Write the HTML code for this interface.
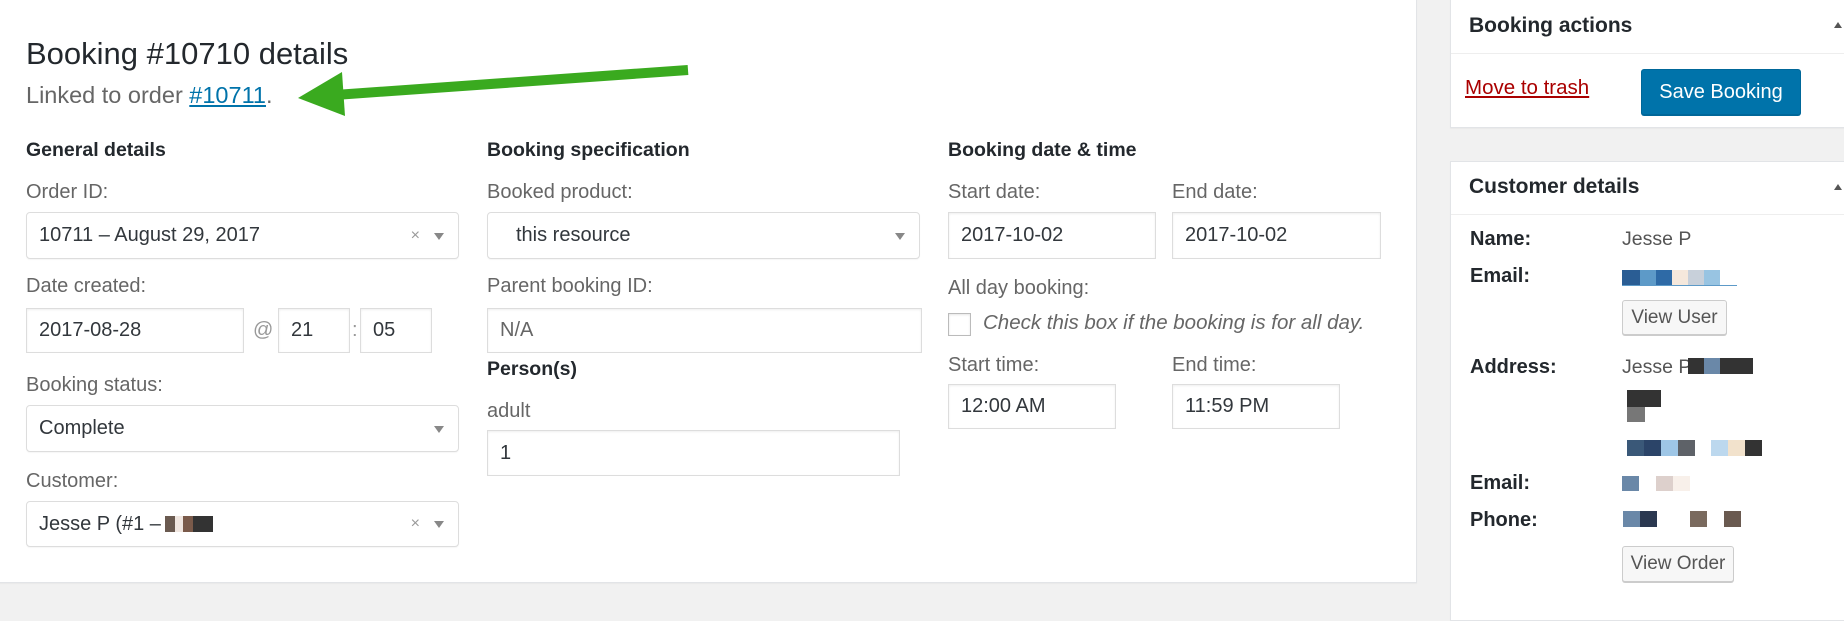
<!DOCTYPE html>
<html><head><meta charset="utf-8"><style>
*{box-sizing:border-box;margin:0;padding:0}
body{width:1844px;height:608px;background:#f1f1f1;position:relative;overflow:hidden;font-family:"Liberation Sans",Arial,sans-serif;color:#444}
.a{position:absolute;white-space:nowrap}
.panel{position:absolute;background:#fff;border:1px solid #e2e4e7;box-shadow:0 1px 1px rgba(0,0,0,.04)}
.lbl{font-size:20px;color:#666}
.h{font-size:19.5px;font-weight:bold;color:#23282d}
.sh{font-size:21px;font-weight:bold;color:#23282d}
.in{position:absolute;border:1px solid #ddd;box-shadow:inset 0 1px 2px rgba(0,0,0,.07);background:#fff;font-size:20px;color:#32373c;padding-left:12px;display:flex;align-items:center}
.sel{border-radius:4px;border-color:#ddd;box-shadow:0 1px 1px rgba(0,0,0,.04)}
.ar{position:absolute;right:14px;top:50%;margin-top:-3px;border-left:5px solid transparent;border-right:5px solid transparent;border-top:7px solid #888}
.x{position:absolute;right:38px;font-size:16px;color:#999}
.cl{font-size:20px;font-weight:bold;color:#23282d}
.cv{font-size:19.5px;color:#555}
.btn{position:absolute;border:1px solid #ccc;border-radius:3px;background:#f7f7f7;box-shadow:0 1px 0 #ccc;font-size:19px;color:#555;display:flex;align-items:center;justify-content:center}
.b{position:absolute}
</style></head><body>
<div class="panel" style="left:-2px;top:-2px;width:1419px;height:585px"></div>
<div class="a" style="left:26px;top:36px;font-size:31px;color:#23282d">Booking #10710 details</div>
<div class="a" style="left:26px;top:82px;font-size:23.5px;color:#666">Linked to order <span style="color:#0073aa;text-decoration:underline">#10711</span>.</div>
<svg class="a" style="left:0;top:0" width="720" height="130"><line x1="688" y1="70" x2="335" y2="95" stroke="#3aaa1f" stroke-width="10"/><polygon points="298,98 342,72 345,116" fill="#3aaa1f"/></svg>

<div class="a h" style="left:26px;top:139px">General details</div>
<div class="a h" style="left:487px;top:139px">Booking specification</div>
<div class="a h" style="left:948px;top:139px">Booking date &amp; time</div>

<div class="a lbl" style="left:26px;top:181px">Order ID:</div>
<div class="in sel" style="left:26px;top:212px;width:433px;height:47px">10711 – August 29, 2017<span class="x">×</span><span class="ar"></span></div>
<div class="a lbl" style="left:26px;top:275px">Date created:</div>
<div class="in" style="left:26px;top:308px;width:218px;height:45px">2017-08-28</div>
<div class="a lbl" style="left:253px;top:319px;color:#999">@</div>
<div class="in" style="left:278px;top:308px;width:72px;height:45px">21</div>
<div class="a lbl" style="left:352px;top:319px;color:#999">:</div>
<div class="in" style="left:360px;top:308px;width:72px;height:45px">05</div>
<div class="a lbl" style="left:26px;top:374px">Booking status:</div>
<div class="in sel" style="left:26px;top:405px;width:433px;height:47px">Complete<span class="ar"></span></div>
<div class="a lbl" style="left:26px;top:470px">Customer:</div>
<div class="in sel" style="left:26px;top:501px;width:433px;height:46px">Jesse P (#1 – <span style="display:inline-block;width:10px;height:16px;background:#6a5a50;margin-left:4px"></span><span style="display:inline-block;width:8px;height:16px;background:#f0e6e0"></span><span style="display:inline-block;width:10px;height:16px;background:#7a5a4a"></span><span style="display:inline-block;width:20px;height:16px;background:#333"></span><span class="x">×</span><span class="ar"></span></div>

<div class="a lbl" style="left:487px;top:181px">Booked product:</div>
<div class="in sel" style="left:487px;top:212px;width:433px;height:47px;padding-left:28px">this resource<span class="ar"></span></div>
<div class="a lbl" style="left:487px;top:275px">Parent booking ID:</div>
<div class="in" style="left:487px;top:308px;width:435px;height:45px;color:#666">N/A</div>
<div class="a h" style="left:487px;top:358px">Person(s)</div>
<div class="a lbl" style="left:487px;top:400px">adult</div>
<div class="in" style="left:487px;top:430px;width:413px;height:46px">1</div>

<div class="a lbl" style="left:948px;top:181px">Start date:</div>
<div class="a lbl" style="left:1172px;top:181px">End date:</div>
<div class="in" style="left:948px;top:212px;width:208px;height:47px">2017-10-02</div>
<div class="in" style="left:1172px;top:212px;width:209px;height:47px">2017-10-02</div>
<div class="a lbl" style="left:948px;top:277px">All day booking:</div>
<div class="a" style="left:948px;top:313px;width:23px;height:23px;border:1px solid #bbb;background:#fff;box-shadow:inset 0 1px 2px rgba(0,0,0,.1)"></div>
<div class="a lbl" style="left:983px;top:311px;font-style:italic;font-size:20.5px">Check this box if the booking is for all day.</div>
<div class="a lbl" style="left:948px;top:354px">Start time:</div>
<div class="a lbl" style="left:1172px;top:354px">End time:</div>
<div class="in" style="left:948px;top:384px;width:168px;height:45px">12:00 AM</div>
<div class="in" style="left:1172px;top:384px;width:168px;height:45px">11:59 PM</div>

<div class="panel" style="left:1450px;top:-2px;width:400px;height:130px"></div>
<div class="a" style="left:1451px;top:53px;width:395px;height:1px;background:#eee"></div>
<div class="a sh" style="left:1469px;top:14px">Booking actions</div>
<div class="a" style="left:1834px;top:22px;border-left:4px solid transparent;border-right:4px solid transparent;border-bottom:6px solid #555"></div>
<div class="a" style="left:1465px;top:76px;font-size:20.5px;color:#a00;text-decoration:underline">Move to trash</div>
<div class="a" style="left:1641px;top:69px;width:160px;height:46px;background:#0073aa;border:1px solid #006799;border-radius:3px;color:#fff;font-size:20px;display:flex;align-items:center;justify-content:center;box-shadow:0 1px 0 #006799">Save Booking</div>

<div class="panel" style="left:1450px;top:161px;width:400px;height:460px"></div>
<div class="a" style="left:1451px;top:214px;width:395px;height:1px;background:#eee"></div>
<div class="a sh" style="left:1469px;top:175px">Customer details</div>
<div class="a" style="left:1834px;top:184px;border-left:4px solid transparent;border-right:4px solid transparent;border-bottom:6px solid #555"></div>
<div class="a cl" style="left:1470px;top:228px">Name:</div>
<div class="a cv" style="left:1622px;top:228px">Jesse P</div>
<div class="a cl" style="left:1470px;top:265px">Email:</div>
<div class="b" style="left:1622px;top:270px;width:18px;height:15px;background:#2a5d94"></div>
<div class="b" style="left:1640px;top:270px;width:16px;height:15px;background:#5d9ac8"></div>
<div class="b" style="left:1656px;top:270px;width:16px;height:15px;background:#2e6aa6"></div>
<div class="b" style="left:1672px;top:270px;width:16px;height:15px;background:#f5e8dc"></div>
<div class="b" style="left:1688px;top:270px;width:16px;height:15px;background:#c8d0da"></div>
<div class="b" style="left:1704px;top:270px;width:16px;height:15px;background:#98c4e2"></div>
<div class="b" style="left:1622px;top:285px;width:115px;height:1px;background:#5d9ac8"></div>
<div class="btn" style="left:1622px;top:300px;width:105px;height:35px">View User</div>
<div class="a cl" style="left:1470px;top:356px">Address:</div>
<div class="a cv" style="left:1622px;top:356px">Jesse P</div>
<div class="b" style="left:1688px;top:358px;width:16px;height:16px;background:#333"></div>
<div class="b" style="left:1704px;top:358px;width:16px;height:16px;background:#6a88a8"></div>
<div class="b" style="left:1720px;top:358px;width:33px;height:16px;background:#333"></div>
<div class="b" style="left:1627px;top:390px;width:34px;height:17px;background:#333"></div>
<div class="b" style="left:1627px;top:407px;width:18px;height:15px;background:#777"></div>
<div class="b" style="left:1627px;top:440px;width:17px;height:16px;background:#3a5878"></div>
<div class="b" style="left:1644px;top:440px;width:17px;height:16px;background:#2b4468"></div>
<div class="b" style="left:1661px;top:440px;width:17px;height:16px;background:#9ec6e6"></div>
<div class="b" style="left:1678px;top:440px;width:17px;height:16px;background:#5e6268"></div>
<div class="b" style="left:1711px;top:440px;width:17px;height:16px;background:#bcd8ee"></div>
<div class="b" style="left:1728px;top:440px;width:17px;height:16px;background:#f2e2cc"></div>
<div class="b" style="left:1745px;top:440px;width:17px;height:16px;background:#333"></div>
<div class="a cl" style="left:1470px;top:472px">Email:</div>
<div class="b" style="left:1622px;top:476px;width:17px;height:15px;background:#6a88a8"></div>
<div class="b" style="left:1656px;top:476px;width:17px;height:15px;background:#ddd0cc"></div>
<div class="b" style="left:1673px;top:476px;width:17px;height:15px;background:#f8f0ea"></div>
<div class="a cl" style="left:1470px;top:509px">Phone:</div>
<div class="b" style="left:1623px;top:511px;width:17px;height:16px;background:#6a88a8"></div>
<div class="b" style="left:1640px;top:511px;width:17px;height:16px;background:#2b3850"></div>
<div class="b" style="left:1690px;top:511px;width:17px;height:16px;background:#7a6a5e"></div>
<div class="b" style="left:1724px;top:511px;width:17px;height:16px;background:#6a5a50"></div>
<div class="btn" style="left:1622px;top:546px;width:112px;height:36px">View Order</div>
</body></html>
